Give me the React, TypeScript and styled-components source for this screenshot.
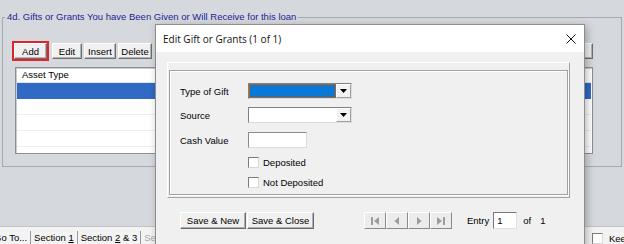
import React from 'react'
import styled, { createGlobalStyle } from 'styled-components'

const GlobalStyle = createGlobalStyle`
  html, body {
    margin: 0;
    padding: 0;
  }
  body {
    background: #d5d9dd;
    font-family: "Liberation Sans", Arial, sans-serif;
    font-size: 9.5px;
    color: #000;
  }
`

type NavKind = 'first' | 'prev' | 'next' | 'last'

const formRows = [
  { label: 'Type of Gift', kind: 'combo', focused: true, gap: 0 },
  { label: 'Source', kind: 'combo', focused: false, gap: 8 },
  { label: 'Cash Value', kind: 'input', focused: false, gap: 9 },
]

function NavIcon({ kind }: { kind: NavKind }) {
  const fill = '#9c9c9c'
  return (
    <svg width="10" height="10" viewBox="0 0 10 10">
      {kind === 'first' && (
        <>
          <rect x="1" y="1" width="2" height="8" fill={fill} />
          <polygon points="9,1 4,5 9,9" fill={fill} />
        </>
      )}
      {kind === 'prev' && <polygon points="7,1 2.5,5 7,9" fill={fill} />}
      {kind === 'next' && <polygon points="3,1 7.5,5 3,9" fill={fill} />}
      {kind === 'last' && (
        <>
          <polygon points="1,1 6,5 1,9" fill={fill} />
          <rect x="7" y="1" width="2" height="8" fill={fill} />
        </>
      )}
    </svg>
  )
}

function DropArrow() {
  return (
    <svg width="7" height="4" viewBox="0 0 7 4">
      <polygon points="0,0 7,0 3.5,4" fill="#000" />
    </svg>
  )
}

export default function App() {
  return (
    <Screen>
      <GlobalStyle />
      <GroupBox>
        <Legend>4d. Gifts or Grants You have Been Given or Will Receive for this loan</Legend>
        <GroupInner>
          <Toolbar>
            <Highlight>
              <ToolButton $w={33}>Add</ToolButton>
            </Highlight>
            <ToolButton $w={30}>Edit</ToolButton>
            <ToolButton $w={32}>Insert</ToolButton>
            <ToolButton $w={34}>Delete</ToolButton>
            <ToolSpacer />
            <ToolButton $w={44}>Close</ToolButton>
          </Toolbar>
          <ListView>
            <ListHeader>Asset Type</ListHeader>
            <ListRow $selected />
            <ListRow />
            <ListRow />
            <ListRow />
          </ListView>
        </GroupInner>
      </GroupBox>

      <TabBar>
        <TabList>
          <Tab $first>Go To...</Tab>
          <Tab>
            Section <u>1</u>
          </Tab>
          <Tab>
            Section <u>2</u> &amp; 3
          </Tab>
          <Tab $disabled>Section 4</Tab>
        </TabList>
        <KeepItem>
          <CheckBox />
          <span>Keep Open</span>
        </KeepItem>
      </TabBar>

      <Dialog>
        <TitleBar>
          <TitleText>Edit Gift or Grants (1 of 1)</TitleText>
          <svg width="10" height="10" viewBox="0 0 10 10">
            <path d="M0.5 0.5 L9.5 9.5 M9.5 0.5 L0.5 9.5" stroke="#111" strokeWidth="1" />
          </svg>
        </TitleBar>
        <DialogBody>
          <Panel>
            <Frame>
              {formRows.map((row) => (
                <FormRow key={row.label} $gap={row.gap} $h={16}>
                  <FieldLabel>{row.label}</FieldLabel>
                  {row.kind === 'combo' ? (
                    <Combo>
                      <ComboField $focused={row.focused} />
                      <DropButton>
                        <DropArrow />
                      </DropButton>
                    </Combo>
                  ) : (
                    <TextBox $w={59} />
                  )}
                </FormRow>
              ))}
              <FormRow $gap={7} $h={14}>
                <FieldLabel />
                <CheckBox />
                <CheckLabel>Deposited</CheckLabel>
              </FormRow>
              <FormRow $gap={6} $h={14}>
                <FieldLabel />
                <CheckBox />
                <CheckLabel>Not Deposited</CheckLabel>
              </FormRow>
            </Frame>
          </Panel>

          <BottomRow>
            <ButtonGroup>
              <DialogButton $w={66}>Save &amp; New</DialogButton>
              <DialogButton $w={67}>Save &amp; Close</DialogButton>
            </ButtonGroup>
            <NavGroup>
              {(['first', 'prev', 'next', 'last'] as NavKind[]).map((k) => (
                <NavButton key={k} disabled>
                  <NavIcon kind={k} />
                </NavButton>
              ))}
            </NavGroup>
            <EntryLabel>Entry</EntryLabel>
            <EntryBox>1</EntryBox>
            <OfText>of</OfText>
            <CountText>1</CountText>
          </BottomRow>
        </DialogBody>
      </Dialog>
    </Screen>
  )
}

const Screen = styled.div`
  position: relative;
  width: 624px;
  height: 244px;
  overflow: hidden;
  background: #d5d9dd;
  display: flex;
  flex-direction: column;
`

const GroupBox = styled.fieldset`
  margin: 10px 2px 0 2px;
  padding: 0;
  min-width: 0;
  border: 1px solid #a6aaae;
`

const Legend = styled.legend`
  margin-left: 2px;
  padding: 0 2px;
  color: #1d1d94;
  font-size: 9.5px;
  line-height: 14px;
`

const GroupInner = styled.div`
  padding: 17px 28px 12px 12px;
  display: flex;
  flex-direction: column;
`

const Toolbar = styled.div`
  display: flex;
  align-items: center;
  gap: 2px;
  height: 20px;
  margin-left: -3px;
`

const Highlight = styled.div`
  display: flex;
  border: 2px solid #e3232c;
  margin-right: 1px;
`

const ToolButton = styled.button<{ $w: number }>`
  box-sizing: border-box;
  width: ${(p) => p.$w}px;
  height: 16px;
  padding: 0;
  font-family: inherit;
  font-size: 9.5px;
  color: #000;
  background: #f0f0f0;
  border: 1px solid;
  border-color: #ffffff #6e6e6e #6e6e6e #ffffff;
  box-shadow: inset -1px -1px 0 #b4b4b4;
`

const ToolSpacer = styled.div`
  flex: 1;
`

const ListView = styled.div`
  margin-top: 6px;
  height: 87px;
  box-sizing: border-box;
  background: #fff;
  border: 1px solid #8c9096;
  padding: 0 1px;
  box-shadow: inset 1px 1px 0 #c8ccd0;
`

const ListHeader = styled.div`
  height: 14px;
  line-height: 14px;
  padding-left: 5px;
  border-bottom: 1px solid #e2e4e6;
  margin-bottom: 0;
  color: #000;
`

const ListRow = styled.div<{ $selected?: boolean }>`
  box-sizing: border-box;
  height: 16px;
  background: ${(p) => (p.$selected ? '#306ac4' : '#fff')};
  border-bottom: 1px solid ${(p) => (p.$selected ? '#306ac4' : '#eeeeee')};
`

const TabBar = styled.div`
  margin-top: auto;
  height: 18px;
  box-sizing: border-box;
  display: flex;
  align-items: flex-start;
  background: #f3f3f3;
  border-top: 1px solid #c2c4c6;
`

const TabList = styled.div`
  flex: 0 0 588px;
  display: flex;
  overflow: hidden;
  padding-top: 4px;
`

const Tab = styled.div<{ $first?: boolean; $disabled?: boolean }>`
  flex-shrink: 0;
  padding: 0 3px;
  margin-left: ${(p) => (p.$first ? '-9px' : '0')};
  line-height: 14px;
  white-space: nowrap;
  color: ${(p) => (p.$disabled ? '#a8a8a8' : '#000')};
  border-right: 1px solid #9a9a9a;
`

const KeepItem = styled.div`
  display: flex;
  align-items: center;
  gap: 6px;
  padding: 6px 0 0 4px;
  white-space: nowrap;
`

const CheckBox = styled.div`
  box-sizing: border-box;
  width: 11px;
  height: 11px;
  flex-shrink: 0;
  background: #fff;
  border: 1px solid;
  border-color: #7c7c7c #d8d8d8 #d8d8d8 #7c7c7c;
`

const Dialog = styled.div`
  position: absolute;
  left: 155px;
  top: 24px;
  width: 430px;
  height: 232px;
  box-sizing: border-box;
  border: 1px solid #8d8d8d;
  background: #f0f0f0;
  box-shadow: 2px 2px 8px rgba(0, 0, 0, 0.28);
  display: flex;
  flex-direction: column;
`

const TitleBar = styled.div`
  height: 27px;
  flex-shrink: 0;
  background: #fff;
  display: flex;
  align-items: center;
  justify-content: space-between;
  padding: 0 8px 0 7px;
`

const TitleText = styled.div`
  font-family: "Open Sans", "Noto Sans", sans-serif;
  font-size: 10px;
  color: #111;
`

const DialogBody = styled.div`
  padding: 10px 14px 0 11px;
`

const Panel = styled.div`
  border: 1px solid;
  border-color: #ffffff #a3a3a3 #a3a3a3 #ffffff;
  padding: 7px 1px 2px 1px;
`

const Frame = styled.div`
  border: 1px solid #a2a2a2;
  box-shadow: inset 1px 1px 0 #ffffff, 1px 1px 0 #ffffff;
  padding: 12px 10px 5px 10px;
`

const FormRow = styled.div<{ $gap: number; $h: number }>`
  display: flex;
  align-items: center;
  height: ${(p) => p.$h}px;
  margin-top: ${(p) => p.$gap}px;
`

const FieldLabel = styled.div`
  width: 68px;
  flex-shrink: 0;
`

const Combo = styled.div`
  box-sizing: border-box;
  width: 104px;
  height: 16px;
  display: flex;
  border: 1px solid;
  border-color: #808080 #dcdcdc #dcdcdc #808080;
  background: #fff;
`

const ComboField = styled.div<{ $focused?: boolean }>`
  flex: 1;
  background: ${(p) => (p.$focused ? '#0a78d6' : '#fff')};
  border: 1px solid ${(p) => (p.$focused ? '#b2621e' : '#fff')};
`

const DropButton = styled.div`
  box-sizing: border-box;
  width: 15px;
  display: flex;
  align-items: center;
  justify-content: center;
  background: #f2f2f2;
  border: 1px solid;
  border-color: #ffffff #a0a0a0 #a0a0a0 #ffffff;
`

const TextBox = styled.div<{ $w: number }>`
  box-sizing: border-box;
  width: ${(p) => p.$w}px;
  height: 16px;
  background: #fff;
  border: 1px solid;
  border-color: #8a8a8a #dcdcdc #dcdcdc #8a8a8a;
`

const CheckLabel = styled.div`
  margin-left: 4px;
`

const BottomRow = styled.div`
  display: flex;
  align-items: center;
  margin-top: 14px;
  padding-left: 13px;
  height: 17px;
`

const ButtonGroup = styled.div`
  display: flex;
  gap: 1px;
`

const DialogButton = styled.button<{ $w: number }>`
  box-sizing: border-box;
  width: ${(p) => p.$w}px;
  height: 17px;
  padding: 0;
  font-family: inherit;
  font-size: 9.5px;
  color: #000;
  background: #f0f0f0;
  border: 1px solid;
  border-color: #ffffff #6a6a6a #6a6a6a #ffffff;
  box-shadow: inset -1px -1px 0 #b0b0b0;
`

const NavGroup = styled.div`
  display: flex;
  margin-left: 50px;
`

const NavButton = styled.button`
  box-sizing: border-box;
  width: 22px;
  height: 17px;
  padding: 0;
  display: flex;
  align-items: center;
  justify-content: center;
  background: #ececec;
  border: 1px solid;
  border-color: #ffffff #8a8a8a #8a8a8a #ffffff;
`

const EntryLabel = styled.div`
  margin-left: 15px;
`

const EntryBox = styled.div`
  box-sizing: border-box;
  width: 24px;
  height: 17px;
  margin-left: 4px;
  padding: 1px 0 0 3px;
  line-height: 13px;
  background: #fff;
  border: 1px solid;
  border-color: #7a7a7a #e0e0e0 #e0e0e0 #7a7a7a;
`

const OfText = styled.div`
  margin-left: 6px;
`

const CountText = styled.div`
  margin-left: 9px;
`
